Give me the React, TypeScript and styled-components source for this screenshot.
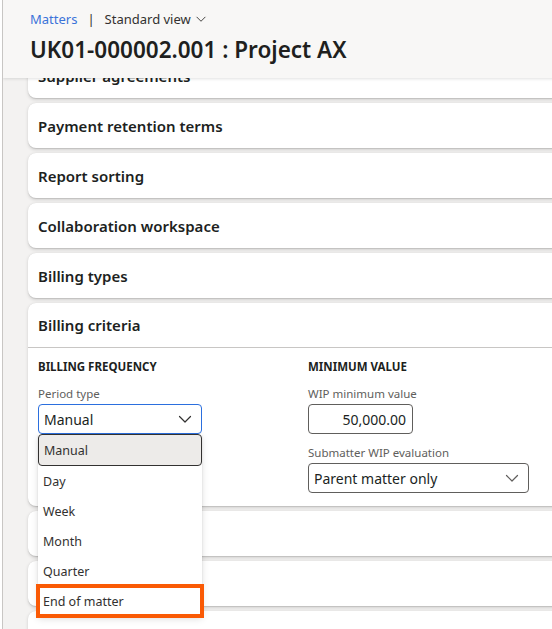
import { createGlobalStyle } from "styled-components";
import styled from "styled-components";

const GlobalStyle = createGlobalStyle`
  html, body {
    margin: 0;
    padding: 0;
    background: #ffffff;
  }
  body {
    font-family: "Noto Sans", "Open Sans", sans-serif;
    color: #323130;
  }
`;

const Page = styled.div`
  width: 552px;
  height: 629px;
  overflow: hidden;
  margin-left: 2px;
  border-left: 1px solid #c8c6c4;
  background: #f3f2f1;
  display: flex;
  flex-direction: column;
`;

const Header = styled.header`
  position: relative;
  z-index: 2;
  flex: none;
  height: 78px;
  box-sizing: border-box;
  padding: 9px 0 0 27px;
  background: #f8f7f6;
  box-shadow: 0 1px 3px rgba(0, 0, 0, 0.12);
`;

const Breadcrumb = styled.div`
  display: flex;
  align-items: center;
  gap: 10px;
  font-size: 13px;
  line-height: 20px;
`;

const Crumb = styled.span`
  color: #3b73d9;
`;

const Divider = styled.span`
  color: #323130;
`;

const ViewPicker = styled.span`
  display: flex;
  align-items: center;
  gap: 4px;
  color: #323130;
`;

const Title = styled.h1`
  margin: 6px 0 0;
  font-size: 22.5px;
  font-weight: 600;
  line-height: 30px;
  color: #201f1e;
`;

const Body = styled.div`
  flex: 1;
  overflow: hidden;
  padding-left: 25px;
`;

const CardList = styled.div`
  width: 600px;
  margin-top: -25px;
  display: flex;
  flex-direction: column;
  gap: 5px;
`;

const Card = styled.section`
  background: #ffffff;
  border-radius: 8px 0 0 8px;
  box-shadow: 0 1.6px 3.6px rgba(0, 0, 0, 0.13), 0 0.3px 0.9px rgba(0, 0, 0, 0.11);
`;

const CardHeader = styled.div<{ $open?: boolean }>`
  height: 45px;
  box-sizing: border-box;
  display: flex;
  align-items: center;
  padding-left: 10px;
  font-size: 15px;
  font-weight: 600;
  color: #201f1e;
  border-bottom: ${(p) => (p.$open ? "1px solid #c8c6c4" : "none")};
`;

const CardBody = styled.div`
  display: grid;
  grid-template-columns: 270px 240px;
  padding: 11px 10px 13px;
`;

const Group = styled.div`
  display: flex;
  flex-direction: column;
`;

const GroupTitle = styled.div`
  font-size: 11.5px;
  font-weight: 700;
  line-height: 16px;
  color: #201f1e;
  margin-bottom: 12px;
`;

const Label = styled.div`
  font-size: 11.5px;
  line-height: 14px;
  color: #605e5c;
  margin-bottom: 3px;
`;

const FieldWrap = styled.div<{ $last?: boolean }>`
  position: relative;
  margin-bottom: ${(p) => (p.$last ? 0 : 12)}px;
`;

const Select = styled.div<{ $width: number; $focused?: boolean }>`
  width: ${(p) => p.$width}px;
  height: 30px;
  box-sizing: border-box;
  display: flex;
  align-items: center;
  justify-content: space-between;
  padding: 0 8px 0 5px;
  border: 1px solid ${(p) => (p.$focused ? "#2b6fde" : "#605e5c")};
  border-radius: 4px;
  font-size: 14px;
  color: #201f1e;
  background: #ffffff;
`;

const NumberInput = styled.div`
  width: 105px;
  height: 30px;
  box-sizing: border-box;
  display: flex;
  align-items: center;
  justify-content: flex-end;
  padding-right: 6px;
  border: 1px solid #605e5c;
  border-radius: 4px;
  font-size: 14px;
  color: #201f1e;
  background: #ffffff;
`;

const Menu = styled.ul`
  position: absolute;
  z-index: 3;
  left: 0;
  top: 30px;
  width: 164px;
  margin: 0;
  padding: 0;
  list-style: none;
  background: #ffffff;
  box-shadow: 0 3.2px 7.2px rgba(0, 0, 0, 0.13), 0 0.6px 1.8px rgba(0, 0, 0, 0.11);
`;

const Option = styled.li<{ $selected?: boolean; $marked?: boolean }>`
  height: ${(p) => (p.$selected ? 32 : 30)}px;
  box-sizing: border-box;
  display: flex;
  align-items: center;
  padding-left: 5px;
  font-size: 12.5px;
  color: #323130;
  background: ${(p) => (p.$selected ? "#edebe9" : "#ffffff")};
  border: ${(p) => (p.$selected ? "1px solid #323130" : "none")};
  border-radius: ${(p) => (p.$selected ? "4px" : "0")};
  outline: ${(p) => (p.$marked ? "4px solid #fa5a05" : "none")};
  outline-offset: ${(p) => (p.$marked ? "-2px" : "0")};
`;

const Chevron = ({ size = 14, color = "#323130" }: { size?: number; color?: string }) => (
  <svg width={size} height={size} viewBox="0 0 16 16" fill="none">
    <path d="M2.5 5.5 8 11l5.5-5.5" stroke={color} strokeWidth="1.2" strokeLinecap="round" strokeLinejoin="round" />
  </svg>
);

const collapsedTop = ["Supplier agreements", "Payment retention terms", "Report sorting", "Collaboration workspace", "Billing types"];
// the first two titles below lie under the open menu, so only the third shows
const collapsedBottom = ["", "", "Client interest"];
const periods = ["Manual", "Day", "Week", "Month", "Quarter", "End of matter"];

export default function App() {
  return (
    <>
      <GlobalStyle />
      <Page>
        <Header>
          <Breadcrumb>
            <Crumb>Matters</Crumb>
            <Divider>|</Divider>
            <ViewPicker>
              Standard view <Chevron size={12} />
            </ViewPicker>
          </Breadcrumb>
          <Title>UK01-000002.001 : Project AX</Title>
        </Header>

        <Body>
          <CardList>
            {collapsedTop.map((t) => (
              <Card key={t}>
                <CardHeader>{t}</CardHeader>
              </Card>
            ))}

            <Card>
              <CardHeader $open>Billing criteria</CardHeader>
              <CardBody>
                <Group>
                  <GroupTitle>BILLING FREQUENCY</GroupTitle>
                  <Label>Period type</Label>
                  <FieldWrap>
                    <Select $width={164} $focused>
                      Manual <Chevron size={16} />
                    </Select>
                    <Menu>
                      {periods.map((p, i) => (
                        <Option key={p} $selected={i === 0} $marked={i === periods.length - 1}>
                          {p}
                        </Option>
                      ))}
                    </Menu>
                  </FieldWrap>
                </Group>
                <Group>
                  <GroupTitle>MINIMUM VALUE</GroupTitle>
                  <Label>WIP minimum value</Label>
                  <FieldWrap>
                    <NumberInput>50,000.00</NumberInput>
                  </FieldWrap>
                  <Label>Submatter WIP evaluation</Label>
                  <FieldWrap $last>
                    <Select $width={221}>
                      Parent matter only <Chevron size={16} color="#605e5c" />
                    </Select>
                  </FieldWrap>
                </Group>
              </CardBody>
            </Card>

            {collapsedBottom.map((t, i) => (
              <Card key={i}>
                <CardHeader>{t}</CardHeader>
              </Card>
            ))}
          </CardList>
        </Body>
      </Page>
    </>
  );
}
